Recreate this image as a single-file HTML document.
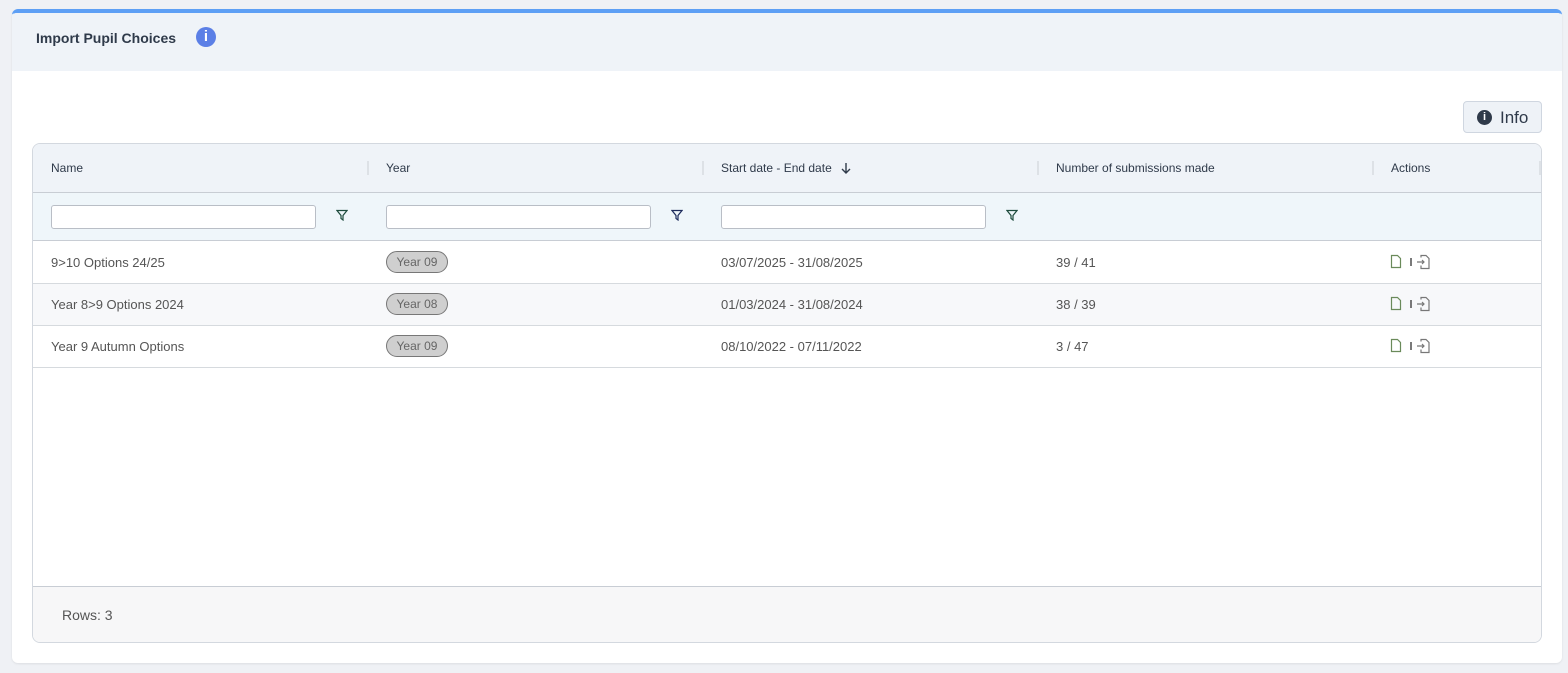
<!DOCTYPE html>
<html><head><meta charset="utf-8"><style>
*{box-sizing:border-box;margin:0;padding:0}
body{width:1568px;height:673px;background:#eff1f5;font-family:"Liberation Sans",sans-serif;position:relative;overflow:hidden}
.panel{position:absolute;left:12px;top:9px;width:1550px;height:654px;background:#fff;border-radius:6px;border-top:4px solid #5d9ff5;overflow:hidden;box-shadow:0 1px 2px rgba(0,0,0,.08)}
.ph{height:58px;background:#eff3f8;position:relative}
.ph .t{position:absolute;left:24px;top:17px;font-size:14px;font-weight:bold;color:#2f3a4a}
.ph .i{position:absolute;left:184px;top:14px;width:20px;height:20px;border-radius:50%;background:#5b7fe6;color:#fff;font:bold 15px "Liberation Sans",sans-serif;text-align:center;line-height:20px}
.info{position:absolute;left:1451px;top:88px;width:79px;height:32px;border:1px solid #cfd6e0;border-radius:4px;background:#eef2f7;font-size:17px;color:#2f3a4a}
.info .c{position:absolute;left:13px;top:8px;width:15px;height:15px;border-radius:50%;background:#2f3a4a;color:#fff;font:bold 11px "Liberation Sans",sans-serif;text-align:center;line-height:15px}
.info span.l{position:absolute;left:36px;top:6px}
.tbl{position:absolute;left:20px;top:130px;width:1510px;height:500px;border:1px solid #d3d8df;border-radius:8px;overflow:hidden}
.hr{position:absolute;left:0;top:0;width:100%;height:49px;background:#eff3f8;border-bottom:1px solid #c8cdd4}
.hc{position:absolute;top:17px;font-size:12px;color:#2f3a4a;line-height:14px}
.sep{position:absolute;top:17px;width:2px;height:14px;background:#dde1e6}
.fr{position:absolute;left:0;top:49px;width:100%;height:48px;background:#eff6fa;border-bottom:1px solid #c8cdd4}
.fi{position:absolute;top:12px;width:265px;height:24px;border:1px solid #b9bec6;border-radius:3px;background:#fff}
.fl{position:absolute;top:16px}
.row{position:absolute;left:0;width:100%;height:42px;border-bottom:1px solid #d6dade;font-size:13px;color:#555}
.row div{position:absolute;top:13px}
.b{top:9px!important;height:22px;width:62px;border:1px solid #777;border-radius:11px;background:#cfcfcf;text-align:center;line-height:20px;font-size:12px;color:#666}
.foot{position:absolute;left:0;top:442px;width:100%;height:58px;background:#f7f7f8;border-top:1px solid #c8cdd4;font-size:14px;color:#555}
</style></head><body>
<div class="panel">
<div class="ph"><div class="t">Import Pupil Choices</div><div class="i">i</div></div>
<div class="info"><div class="c">i</div><span class="l">Info</span></div>
<div class="tbl">
<div class="hr">
<div class="hc" style="left:18px">Name</div><div class="sep" style="left:334px"></div>
<div class="hc" style="left:353px">Year</div><div class="sep" style="left:669px"></div>
<div class="hc" style="left:688px">Start date - End date <svg width="12" height="12" viewBox="0 0 12 12" style="vertical-align:-2px;margin-left:5px"><path d="M6 1v10M2 7l4 4 4-4" fill="none" stroke="#2f3a4a" stroke-width="1.4"/></svg></div><div class="sep" style="left:1004px"></div>
<div class="hc" style="left:1023px">Number of submissions made</div><div class="sep" style="left:1339px"></div>
<div class="hc" style="left:1358px">Actions</div><div class="sep" style="left:1506px"></div>
</div>
<div class="fr">
<div class="fi" style="left:18px"></div><svg class="fl" style="left:303px" width="12" height="12" viewBox="0 0 12 12"><path d="M1 1.5h10L7 6.5V11L5 9.5V6.5Z" fill="none" stroke="#1d4b3c" stroke-width="1.2"/></svg>
<div class="fi" style="left:353px"></div><svg class="fl" style="left:638px" width="12" height="12" viewBox="0 0 12 12"><path d="M1 1.5h10L7 6.5V11L5 9.5V6.5Z" fill="none" stroke="#1d2b5c" stroke-width="1.2"/></svg>
<div class="fi" style="left:688px"></div><svg class="fl" style="left:973px" width="12" height="12" viewBox="0 0 12 12"><path d="M1 1.5h10L7 6.5V11L5 9.5V6.5Z" fill="none" stroke="#1d4b3c" stroke-width="1.2"/></svg>
</div>
<div class="row" style="top:98px;background:#fff"><div style="left:18px">9&gt;10 Options 24/25</div><div class="b" style="left:353px">Year 09</div><div style="left:688px">03/07/2025 - 31/08/2025</div><div style="left:1023px">39 / 41</div><div style="left:1357px;top:12px"><svg width="50" height="16" viewBox="0 0 50 16"><path d="M1.5 1.5h6l3 3v9h-9z" fill="none" stroke="#6a8a5a" stroke-width="1.2"/><path d="M21 4v8" stroke="#333" stroke-width="1.3"/><path d="M31 3.5V1.5h5l3 3v10h-8v-3M27 8h7M32 6l2 2-2 2" fill="none" stroke="#777" stroke-width="1.2"/></svg></div></div>
<div class="row" style="top:140px;background:#f7f8fa"><div style="left:18px">Year 8&gt;9 Options 2024</div><div class="b" style="left:353px">Year 08</div><div style="left:688px">01/03/2024 - 31/08/2024</div><div style="left:1023px">38 / 39</div><div style="left:1357px;top:12px"><svg width="50" height="16" viewBox="0 0 50 16"><path d="M1.5 1.5h6l3 3v9h-9z" fill="none" stroke="#6a8a5a" stroke-width="1.2"/><path d="M21 4v8" stroke="#333" stroke-width="1.3"/><path d="M31 3.5V1.5h5l3 3v10h-8v-3M27 8h7M32 6l2 2-2 2" fill="none" stroke="#777" stroke-width="1.2"/></svg></div></div>
<div class="row" style="top:182px;background:#fff"><div style="left:18px">Year 9 Autumn Options</div><div class="b" style="left:353px">Year 09</div><div style="left:688px">08/10/2022 - 07/11/2022</div><div style="left:1023px">3 / 47</div><div style="left:1357px;top:12px"><svg width="50" height="16" viewBox="0 0 50 16"><path d="M1.5 1.5h6l3 3v9h-9z" fill="none" stroke="#6a8a5a" stroke-width="1.2"/><path d="M21 4v8" stroke="#333" stroke-width="1.3"/><path d="M31 3.5V1.5h5l3 3v10h-8v-3M27 8h7M32 6l2 2-2 2" fill="none" stroke="#777" stroke-width="1.2"/></svg></div></div>
<div class="foot"><div style="position:absolute;left:29px;top:20px">Rows: 3</div></div>
</div>
</div>
</body></html>
